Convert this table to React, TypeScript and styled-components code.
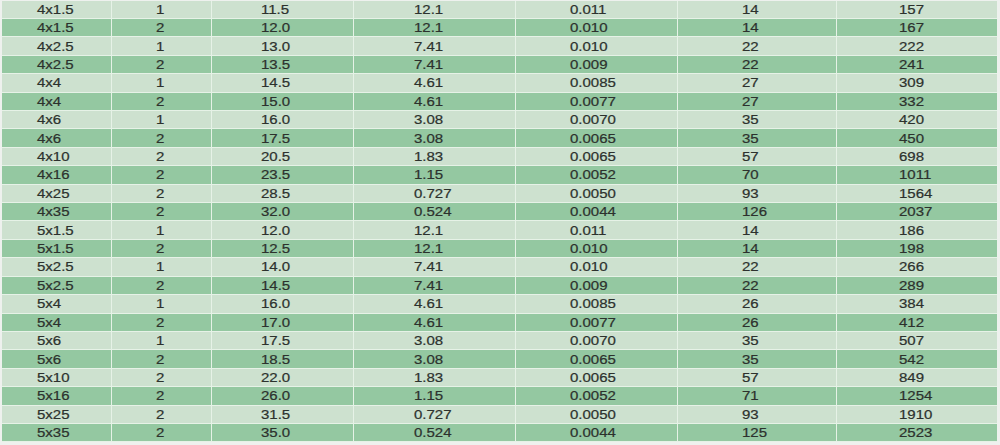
import React from 'react';
import styled, { createGlobalStyle } from 'styled-components';

const GlobalStyle = createGlobalStyle`
  html, body {
    margin: 0;
    padding: 0;
    background: #eef1ee;
  }
  body {
    font-family: "Liberation Sans", Arial, sans-serif;
  }
`;

const Table = styled.div`
  width: 995px;
  margin-left: 2px;
  padding-top: 0.6px;
  display: flex;
  flex-direction: column;
`;

const Row = styled.div<{ $dark: boolean }>`
  display: grid;
  grid-template-columns: 110px 100px 142px 162px 162px 159px 160px;
  height: 17.41px;
  border-bottom: 1px solid #e6f2e7;
  background: ${(p) => (p.$dark ? '#94c8a1' : '#cde1cf')};
`;

const Cell = styled.div<{ $pad: number }>`
  display: flex;
  align-items: center;
  padding-left: ${(p) => p.$pad}px;
  border-right: 1px solid #e6f2e7;
  white-space: nowrap;

  &:last-child {
    border-right: none;
  }
`;

const Text = styled.span`
  display: inline-block;
  font-size: 12px;
  line-height: 1;
  color: #2c312d;
  -webkit-text-stroke: 0.2px #2c312d;
  transform: scaleX(1.25);
  transform-origin: left center;
  margin-top: 1px;
`;

// left offsets of the text inside each column
const pads = [34.5, 44, 49, 60, 53.5, 63.5, 62];

const rows: string[][] = [
  ['4x1.5', '1', '11.5', '12.1', '0.011', '14', '157'],
  ['4x1.5', '2', '12.0', '12.1', '0.010', '14', '167'],
  ['4x2.5', '1', '13.0', '7.41', '0.010', '22', '222'],
  ['4x2.5', '2', '13.5', '7.41', '0.009', '22', '241'],
  ['4x4', '1', '14.5', '4.61', '0.0085', '27', '309'],
  ['4x4', '2', '15.0', '4.61', '0.0077', '27', '332'],
  ['4x6', '1', '16.0', '3.08', '0.0070', '35', '420'],
  ['4x6', '2', '17.5', '3.08', '0.0065', '35', '450'],
  ['4x10', '2', '20.5', '1.83', '0.0065', '57', '698'],
  ['4x16', '2', '23.5', '1.15', '0.0052', '70', '1011'],
  ['4x25', '2', '28.5', '0.727', '0.0050', '93', '1564'],
  ['4x35', '2', '32.0', '0.524', '0.0044', '126', '2037'],
  ['5x1.5', '1', '12.0', '12.1', '0.011', '14', '186'],
  ['5x1.5', '2', '12.5', '12.1', '0.010', '14', '198'],
  ['5x2.5', '1', '14.0', '7.41', '0.010', '22', '266'],
  ['5x2.5', '2', '14.5', '7.41', '0.009', '22', '289'],
  ['5x4', '1', '16.0', '4.61', '0.0085', '26', '384'],
  ['5x4', '2', '17.0', '4.61', '0.0077', '26', '412'],
  ['5x6', '1', '17.5', '3.08', '0.0070', '35', '507'],
  ['5x6', '2', '18.5', '3.08', '0.0065', '35', '542'],
  ['5x10', '2', '22.0', '1.83', '0.0065', '57', '849'],
  ['5x16', '2', '26.0', '1.15', '0.0052', '71', '1254'],
  ['5x25', '2', '31.5', '0.727', '0.0050', '93', '1910'],
  ['5x35', '2', '35.0', '0.524', '0.0044', '125', '2523'],
];

const App = () => {
  return (
    <>
      <GlobalStyle />
      <Table>
        {rows.map((row, i) => (
          <Row key={i} $dark={i % 2 === 1}>
            {row.map((value, j) => (
              <Cell key={j} $pad={pads[j]}>
                <Text>{value}</Text>
              </Cell>
            ))}
          </Row>
        ))}
      </Table>
    </>
  );
};

export default App;
